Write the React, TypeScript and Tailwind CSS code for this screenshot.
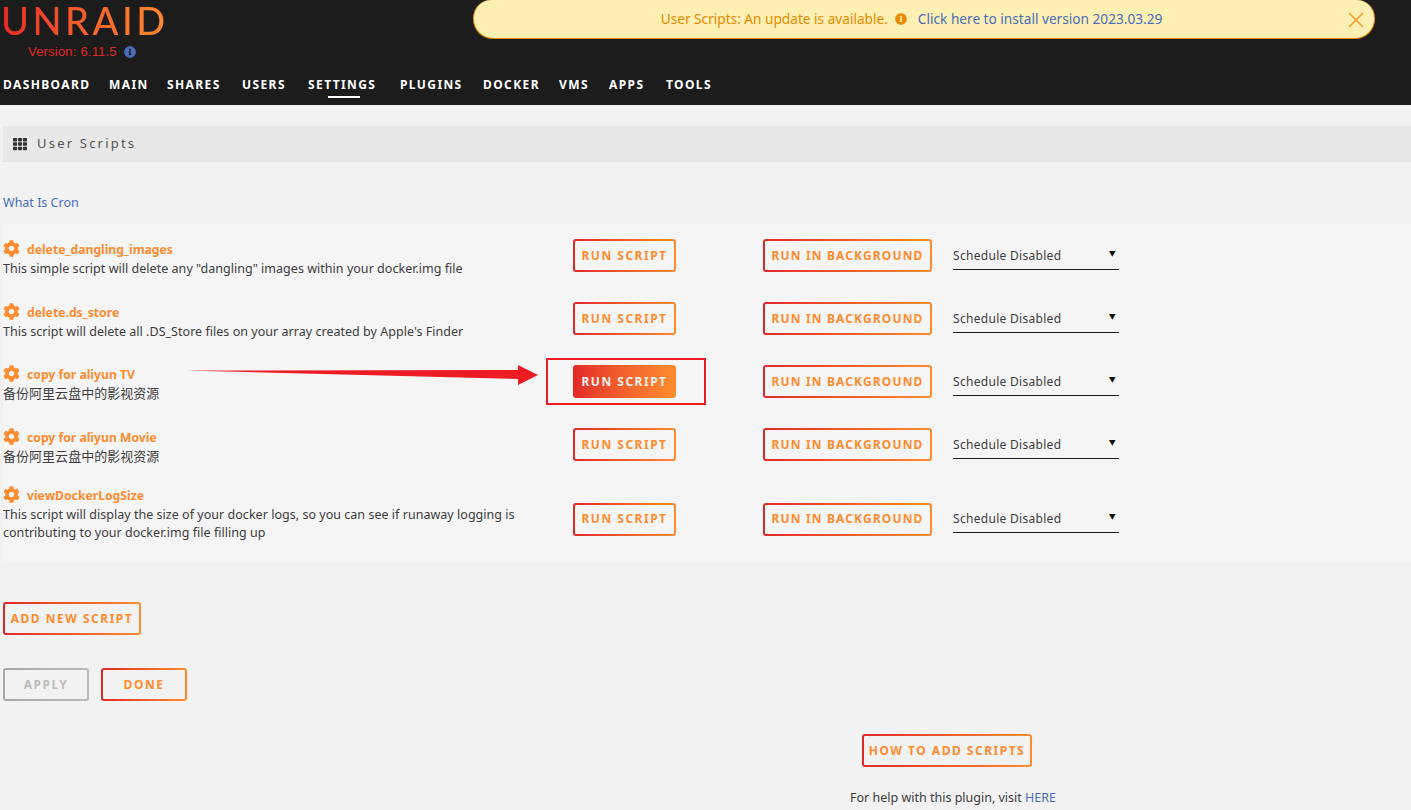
import React from "react";
import { FaCog, FaInfoCircle, FaTh } from "react-icons/fa";

const nav = [
  { t: "DASHBOARD", w: "w-[106px]" },
  { t: "MAIN", w: "w-[58px]" },
  { t: "SHARES", w: "w-[75px]" },
  { t: "USERS", w: "w-[66px]" },
  { t: "SETTINGS", w: "w-[92px]" },
  { t: "PLUGINS", w: "w-[83px]" },
  { t: "DOCKER", w: "w-[76px]" },
  { t: "VMS", w: "w-[50px]" },
  { t: "APPS", w: "w-[57px]" },
  { t: "TOOLS", w: "w-[50px]" },
];

const rows = [
  { name: "delete_dangling_images", desc: ["This simple script will delete any \"dangling\" images within your docker.img file"], h: "h-[63px]", pt: "pt-[17px]", size: "mt-[1px] text-[12.5px]", sel: "", active: false },
  { name: "delete.ds_store", desc: ["This script will delete all .DS_Store files on your array created by Apple's Finder"], h: "h-[63px]", pt: "pt-[17px]", size: "mt-[1px] text-[12.5px]", sel: "", active: false },
  { name: "copy for aliyun TV", desc: ["备份阿里云盘中的影视资源"], h: "h-[63px]", pt: "pt-[16px]", size: "text-[13px]", sel: "", active: true },
  { name: "copy for aliyun Movie", desc: ["备份阿里云盘中的影视资源"], h: "h-[63px]", pt: "pt-[16px]", size: "text-[13px]", sel: "", active: false },
  { name: "viewDockerLogSize", desc: ["This script will display the size of your docker logs, so you can see if runaway logging is", "contributing to your docker.img file filling up"], h: "h-[86px]", pt: "pt-[11px]", size: "mt-[1px] text-[12.5px]", sel: "pb-[2px]", active: false },
];

function Btn({ children, w, bg = "page", active = false, disabled = false }: { children: React.ReactNode; w: string; bg?: "page" | "panel"; active?: boolean; disabled?: boolean }) {
  let skin = "";
  if (active) skin = "bg-gradient-to-r from-[#e22828] to-[#ff8c2f] text-[#f5f0ea]";
  else if (disabled) skin = "border-2 border-transparent text-[#bcbcbc] [background:linear-gradient(#f2f2f2,#f2f2f2)_padding-box,linear-gradient(90deg,#a8a8a8,#bababa)_border-box]";
  else if (bg === "panel") skin = "border-2 border-transparent text-[#ff8c2f] [background:linear-gradient(#f5f5f5,#f5f5f5)_padding-box,linear-gradient(90deg,#e22828,#ff8c2f)_border-box]";
  else skin = "border-2 border-transparent text-[#ff8c2f] [background:linear-gradient(#f2f2f2,#f2f2f2)_padding-box,linear-gradient(90deg,#e22828,#ff8c2f)_border-box]";
  return (
    <div className={`flex h-[33px] items-center justify-center whitespace-nowrap rounded-[3px] text-[12px] font-bold tracking-[1.5px] ${w} ${skin}`}>
      {children}
    </div>
  );
}

export default function App() {
  return (
    <div className="relative h-[810px] w-[1411px] overflow-hidden bg-[#f2f2f2] font-['Noto_Sans','Noto_Sans_CJK_SC',sans-serif] text-[#3c3c3c]">
      <header className="h-[105px] bg-[#1c1c1c]">
        <div className="flex h-[75px] items-start">
          <div className="w-[473px] shrink-0">
            <div className="ml-[1px] h-[40px] w-[172px] bg-gradient-to-r from-[#e22828] to-[#ff8c2f] bg-clip-text font-['Lato',sans-serif] text-[38px] font-medium leading-[40px] tracking-[3.5px] text-transparent">
              UNRAID
            </div>
            <div className="ml-[28px] mt-[4px] flex items-center gap-[7px] font-['Liberation_Sans',sans-serif] text-[13px] leading-[16px] tracking-[0.2px] text-[#e22828]">
              <span>Version: 6.11.5</span>
              <FaInfoCircle className="text-[12px] text-[#486dba]" />
            </div>
          </div>
          <div className="flex h-[39px] w-[902px] items-center rounded-b-[20px] rounded-t-[18px] border border-t-0 border-[#e68a00] bg-[#feefb3] text-[13.65px] text-[#e68a00]">
            <div className="flex flex-1 items-center justify-center gap-[7px] pl-[1px]">
              <span>User Scripts: An update is available.</span>
              <FaInfoCircle className="text-[12px]" />
              <span className="ml-[4px] text-[#486dba]">Click here to install version 2023.03.29</span>
            </div>
            <svg width="16" height="16" viewBox="0 0 16 16" className="mr-[10px] mt-[1px]" fill="none" stroke="#f0a030" strokeWidth="1.6">
              <path d="M1 1 L15 15 M15 1 L1 15" />
            </svg>
          </div>
        </div>
        <nav className="flex h-[30px] pl-[3px] text-[12px] font-bold leading-[20px] tracking-[1.4px] text-white">
          {nav.map((n) => (
            <div key={n.t} className={`relative whitespace-nowrap ${n.w}`}>
              {n.t}
              {n.t === "SETTINGS" && <div className="absolute left-[20px] top-[21px] h-[2px] w-[32px] bg-white" />}
            </div>
          ))}
        </nav>
      </header>

      <div className="ml-[3px] mt-[21px] flex h-[36px] items-center border-b border-[#e4e4e4] bg-[#e8e8e8] pl-[10px] text-[13px] tracking-[2.2px] text-[#555]">
        <FaTh className="mr-[10px] text-[14px] text-[#333]" />
        <span>User Scripts</span>
      </div>

      <div className="ml-[3px] mt-[32px] h-[30px] text-[12.5px] leading-[18px] text-[#486dba]">What Is Cron</div>

      <section className="ml-[3px] bg-[#f5f5f5]">
        {rows.map((r) => (
          <div key={r.name} className={`grid grid-cols-[570px_190px_190px_166px] items-center ${r.h}`}>
            <div className={`h-full ${r.pt}`}>
              <div className="flex h-[18px] items-center gap-[7px] text-[12.2px] font-bold text-[#ff8c2f]">
                <FaCog className="mt-[-4px] text-[17px]" />
                <span>{r.name}</span>
              </div>
              <div className={`leading-[18px] tracking-[0.03px] text-[#3c3c3c] ${r.size}`}>
                {r.desc.map((d) => (
                  <div key={d}>{d}</div>
                ))}
              </div>
            </div>
            <Btn w="w-[103px]" bg="panel" active={r.active}>RUN SCRIPT</Btn>
            <Btn w="w-[169px]" bg="panel"><span className="tracking-[1.15px]">RUN IN BACKGROUND</span></Btn>
            <div className={`flex h-[28px] items-center justify-between border-b border-[#1c1c1c] pr-[3px] pt-[2px] text-[12px] tracking-[0.3px] ${r.sel}`}>
              <span>Schedule Disabled</span>
              <span className="mt-[-3px] text-[7px] text-[#111]">▼</span>
            </div>
          </div>
        ))}
      </section>

      <div className="ml-[3px] mt-[40px]">
        <Btn w="w-[138px]">ADD NEW SCRIPT</Btn>
      </div>
      <div className="ml-[3px] mt-[33px] flex gap-[12px]">
        <Btn w="w-[86px]" disabled>APPLY</Btn>
        <Btn w="w-[86px]">DONE</Btn>
      </div>
      <div className="ml-[862px] mt-[33px]">
        <Btn w="w-[170px]">HOW TO ADD SCRIPTS</Btn>
      </div>
      <div className="ml-[850px] mt-[22px] text-[12.5px] leading-[18px]">
        For help with this plugin, visit <span className="text-[#486dba]">HERE</span>
      </div>

      <svg className="pointer-events-none absolute left-[186px] top-[362px]" width="356" height="26" viewBox="0 0 356 26">
        <path d="M0 8.5 L332 8 L332 3 L352 13 L332 23 L332 17 Z" fill="#ed1c24" />
      </svg>
      <div className="pointer-events-none absolute left-[546px] top-[358px] h-[47px] w-[160px] border-2 border-[#ed1c24]" />
    </div>
  );
}
